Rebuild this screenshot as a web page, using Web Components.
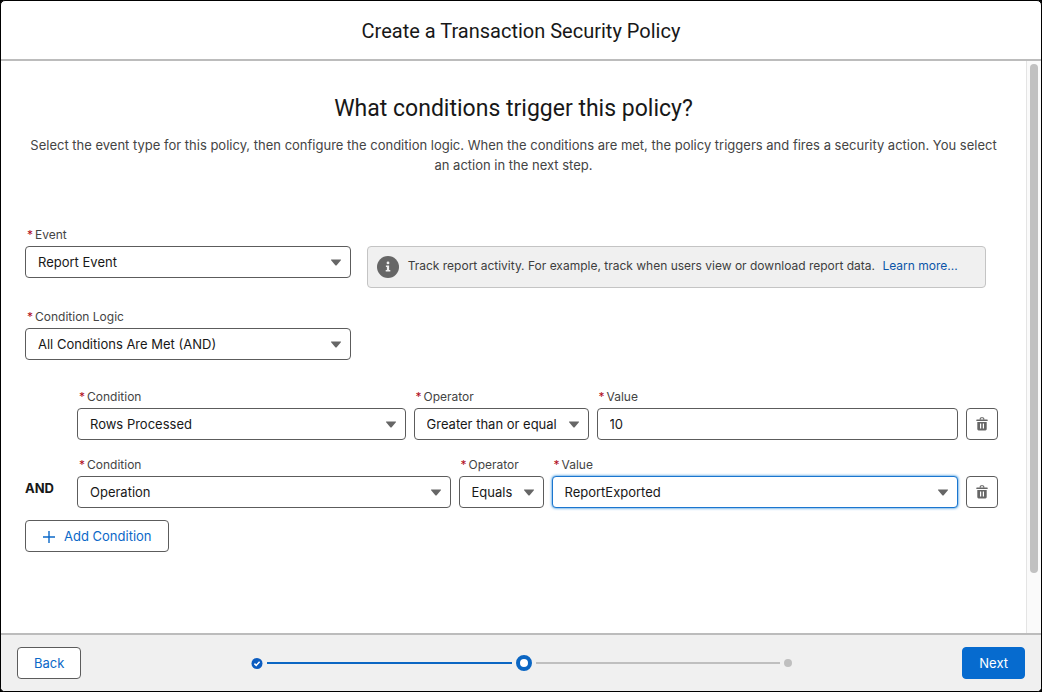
<!DOCTYPE html>
<html lang="en">
<head>
<meta charset="utf-8">
<meta name="viewport" content="width=device-width, initial-scale=1">
<title>Create a Transaction Security Policy</title>
<style>
  body {
    margin: 0;
    background: #000;
    color: #181818;
    font: 13px/20px Inter, "Liberation Sans", sans-serif;
  }
</style>
</head>
<body>
<tsp-wizard>
  <h1 slot="title">Create a Transaction Security Policy</h1>
  <tsp-intro>
    <h2 slot="heading">What conditions trigger this policy?</h2>
    Select the event type for this policy, then configure the condition logic. When the conditions are met, the policy triggers and fires a security action. You select an action in the next step.
  </tsp-intro>
  <tsp-event-form></tsp-event-form>
  <tsp-button slot="back">Back</tsp-button>
  <tsp-progress slot="progress"></tsp-progress>
  <tsp-button slot="next" variant="brand">Next</tsp-button>
</tsp-wizard>

<script>
/**
 * Creates a template element from markup.
 *
 * @param {string} html - The markup.
 * @returns {HTMLTemplateElement} - The template.
 */
function createTemplate (html) {
  const template = document.createElement('template')
  template.innerHTML = html
  return template
}

const wizardTemplate = createTemplate(`
 <style>
   :host {
     display: flex;
     flex-direction: column;
     box-sizing: border-box;
     height: 100vh;
     border: 1px solid #000;
     border-radius: 5px;
     background: #fff;
     overflow: hidden;
   }
   header {
     padding: 17px 16px 15px;
     border-bottom: 2px solid #bcbcbc;
     text-align: center;
   }
   ::slotted(h1) {
     margin: 0;
     font-family: Roboto, Inter, sans-serif;
     font-size: 20px;
     line-height: 26px;
     font-weight: 400;
   }
   .body {
     display: flex;
     flex: 1;
     min-height: 0;
   }
   main {
     flex: 1;
     padding: 32px 24px 0;
     overflow: hidden;
   }
   .track {
     display: flex;
     flex-direction: column;
     width: 15px;
     padding: 3px 0;
     box-sizing: border-box;
     border-left: 1px solid #e4e4e4;
     background: #fafafa;
   }
   .thumb {
     height: 90%;
     margin: 0 3px;
     border-radius: 4px;
     background: #c1c1c1;
   }
   footer {
     display: flex;
     align-items: center;
     justify-content: space-between;
     padding: 12px 16px;
     border-top: 2px solid #bcbcbc;
     background: #f0f0f0;
   }
   ::slotted(tsp-progress) {
     flex: 1;
     margin: 0 170px;
   }
 </style>

 <header><slot name="title"></slot></header>
 <div class="body">
   <main><slot></slot></main>
   <div class="track" aria-hidden="true"><div class="thumb"></div></div>
 </div>
 <footer>
   <slot name="back"></slot>
   <slot name="progress"></slot>
   <slot name="next"></slot>
 </footer>
`)

customElements.define('tsp-wizard',
  class Wizard extends HTMLElement {
    constructor () {
      super()
      this.attachShadow({ mode: 'open' })
        .appendChild(wizardTemplate.content.cloneNode(true))
    }
  }
)

const introTemplate = createTemplate(`
 <style>
   :host {
     display: block;
     margin-bottom: 51px;
     text-align: center;
   }
   ::slotted(h2) {
     margin: 0 0 10px;
     font-family: Roboto, Inter, sans-serif;
     font-size: 23px;
     line-height: 32px;
     font-weight: 400;
   }
   p {
     margin: 0;
     color: #444;
   }
 </style>

 <slot name="heading"></slot>
 <p><slot></slot></p>
`)

customElements.define('tsp-intro',
  /**
   * Represents the heading of a step and its description.
   */
  class Intro extends HTMLElement {
    constructor () {
      super()
      this.attachShadow({ mode: 'open' })
        .appendChild(introTemplate.content.cloneNode(true))
    }
  }
)

const fieldTemplate = createTemplate(`
 <style>
   :host {
     display: block;
   }
   label {
     display: block;
     padding: 0 2px 2px;
     color: #444;
     font-size: 12px;
     line-height: 18px;
     white-space: nowrap;
   }
   label span {
     margin-right: 2px;
     color: #b00c1a;
   }
   .control {
     position: relative;
   }
   select,
   input {
     display: block;
     box-sizing: border-box;
     width: 100%;
     height: 32px;
     margin: 0;
     padding: 0 12px;
     border: 1px solid #5c5c5c;
     border-radius: 4px;
     outline: 0;
     background: #fff;
     color: #181818;
     font: inherit;
     appearance: none;
   }
   select {
     padding-right: 30px;
   }
   svg {
     position: absolute;
     top: 13px;
     right: 9px;
     width: 12px;
     height: 7px;
     fill: #666;
     pointer-events: none;
   }
   :host([active]) select {
     border-color: #1b76cf;
     box-shadow: 0 0 3px #0176d3;
   }
 </style>

 <label for="field"><span aria-hidden="true">*</span></label>
 <div class="control"></div>
`)

customElements.define('tsp-field',
  /**
   * Represents a required field, either a drop-down or a text box.
   */
  class Field extends HTMLElement {
    constructor () {
      super()
      this.attachShadow({ mode: 'open' })
        .appendChild(fieldTemplate.content.cloneNode(true))
    }

    /**
     * Called after the element is inserted into the DOM.
     */
    connectedCallback () {
      const value = this.getAttribute('value')
      this.shadowRoot.querySelector('label').append(this.getAttribute('label'))

      const control = this.shadowRoot.querySelector('.control')
      if (this.hasAttribute('text')) {
        control.innerHTML = `<input id="field" type="text" value="${value}" required>`
      } else {
        control.innerHTML = `
          <select id="field" required><option>${value}</option></select>
          <svg viewBox="0 0 12 7" aria-hidden="true"><path d="M1.4 0.5h9.2q.8 0 .3.7L6.7 6.2q-.7.7-1.4 0L1.1 1.2q-.5-.7.3-.7z"/></svg>`
      }
    }
  }
)

const buttonTemplate = createTemplate(`
 <style>
   :host {
     display: inline-block;
   }
   button {
     display: flex;
     align-items: center;
     gap: 8px;
     box-sizing: border-box;
     height: 32px;
     margin: 0;
     padding: 0 16px;
     border: 1px solid #5c5c5c;
     border-radius: 4px;
     background: #fff;
     color: #0b68c8;
     font: inherit;
   }
   :host([variant=brand]) button {
     border-color: #066bcf;
     background: #066bcf;
     color: #fff;
   }
 </style>

 <button type="button"><slot></slot></button>
`)

customElements.define('tsp-button',
  /**
   * Represents a button.
   */
  class Button extends HTMLElement {
    constructor () {
      super()
      this.attachShadow({ mode: 'open' })
        .appendChild(buttonTemplate.content.cloneNode(true))
    }
  }
)

const progressTemplate = createTemplate(`
 <style>
   :host {
     display: flex;
     align-items: center;
     gap: 4px;
   }
   svg {
     width: 12px;
     height: 12px;
   }
   .line {
     flex: 1;
     height: 2px;
     background: #bfbfbf;
   }
   .done {
     background: #0b66c3;
   }
   .current {
     box-sizing: border-box;
     width: 16px;
     height: 16px;
     border: 4px solid #0b66c3;
     border-radius: 50%;
     background: #fff;
   }
   .next {
     width: 8px;
     height: 8px;
     border-radius: 50%;
     background: #bfbfbf;
   }
 </style>

 <svg viewBox="0 0 12 12" role="img" aria-label="Completed">
   <circle cx="6" cy="6.5" r="5.5" fill="#0b5cc0"/>
   <path d="M3.4 6.6l1.8 1.8 3.4-3.6" fill="none" stroke="#fff" stroke-width="1.5"/>
 </svg>
 <div class="line done"></div>
 <div class="current"></div>
 <div class="line"></div>
 <div class="next"></div>
`)

customElements.define('tsp-progress',
  /**
   * Represents the progress through the three steps.
   */
  class Progress extends HTMLElement {
    constructor () {
      super()
      this.attachShadow({ mode: 'open' })
        .appendChild(progressTemplate.content.cloneNode(true))
    }
  }
)

const noteTemplate = createTemplate(`
 <style>
   :host {
     display: flex;
     gap: 9px;
     padding: 9px;
     border: 1px solid #c4c4c4;
     border-radius: 4px;
     background: #f0f0f0;
     color: #3e3e3e;
     font-size: 12px;
   }
   svg {
     flex: none;
     width: 22px;
     height: 22px;
   }
   ::slotted(a) {
     margin-left: 4px;
     color: #0b55a8;
     text-decoration: none;
   }
 </style>

 <svg viewBox="0 0 22 22" aria-hidden="true">
   <circle cx="11" cy="11" r="11" fill="#666"/>
   <circle cx="11" cy="6.9" r="1.4" fill="#f0f0f0"/>
   <path d="M8.9 9.5h3.2v4.6h1.2v1.5H8.7v-1.5h1.2V11h-1z" fill="#f0f0f0"/>
 </svg>
 <div><slot></slot></div>
`)

customElements.define('tsp-note',
  /**
   * Represents an informational note.
   */
  class Note extends HTMLElement {
    constructor () {
      super()
      this.attachShadow({ mode: 'open' })
        .appendChild(noteTemplate.content.cloneNode(true))
    }
  }
)

const rowTemplate = createTemplate(`
 <style>
   :host {
     display: flex;
     align-items: flex-end;
     gap: 8px;
     padding-right: 4px;
   }
   .logic {
     width: 44px;
     padding-bottom: 10px;
     font-weight: 700;
   }
   ::slotted([label=Condition]) {
     flex: 1 1 0;
   }
   ::slotted([label=Operator]) {
     flex: none;
   }
   ::slotted([label=Value]) {
     flex: 1 1 33px;
   }
   button {
     display: flex;
     align-items: center;
     justify-content: center;
     box-sizing: border-box;
     width: 32px;
     height: 32px;
     margin: 0;
     padding: 0;
     border: 1px solid #5c5c5c;
     border-radius: 4px;
     background: #fff;
   }
   svg {
     width: 12px;
     height: 14px;
   }
 </style>

 <div class="logic"></div>
 <slot></slot>
 <button type="button" aria-label="Delete condition">
   <svg viewBox="0 0 12 14" aria-hidden="true">
     <path d="M4.2 2.8V1.7q0-1 1-1h1.6q1 0 1 1v1.1" fill="none" stroke="#666" stroke-width="1.1"/>
     <rect x="0.3" y="2.5" width="11.4" height="1.6" rx="0.6" fill="#666"/>
     <path fill-rule="evenodd" fill="#666" d="M1.3 5h9.4v7.1q0 1.3-1.3 1.3H2.6q-1.3 0-1.3-1.3zM4 6.4v5.2h1.2V6.4zM6.8 6.4v5.2H8V6.4z"/>
   </svg>
 </button>
`)

customElements.define('tsp-condition-row',
  /**
   * Represents one condition with its delete button.
   */
  class ConditionRow extends HTMLElement {
    constructor () {
      super()
      this.attachShadow({ mode: 'open' })
        .appendChild(rowTemplate.content.cloneNode(true))
    }

    /**
     * Called after the element is inserted into the DOM.
     */
    connectedCallback () {
      this.shadowRoot.querySelector('.logic').textContent = this.getAttribute('logic') || ''
    }
  }
)

const formTemplate = createTemplate(`
 <style>
   :host {
     display: block;
   }
   .event {
     display: flex;
     align-items: flex-start;
     margin-bottom: 20px;
   }
   .third {
     flex: none;
     width: calc(100% / 3);
   }
   tsp-note {
     flex: 1;
     margin: 20px 16px 0;
   }
   .conditions {
     display: grid;
     gap: 16px;
     margin: 28px 0 12px;
   }
   svg {
     width: 14px;
     height: 14px;
   }
 </style>

 <div class="event">
   <tsp-field class="third" label="Event" value="Report Event"></tsp-field>
   <tsp-note>Track report activity. For example, track when users view or download report data. <a href="#">Learn more...</a></tsp-note>
 </div>
 <tsp-field class="third" label="Condition Logic" value="All Conditions Are Met (AND)"></tsp-field>
 <div class="conditions">
   <tsp-condition-row>
     <tsp-field label="Condition" value="Rows Processed"></tsp-field>
     <tsp-field label="Operator" value="Greater than or equal"></tsp-field>
     <tsp-field label="Value" value="10" text></tsp-field>
   </tsp-condition-row>
   <tsp-condition-row logic="AND">
     <tsp-field label="Condition" value="Operation"></tsp-field>
     <tsp-field label="Operator" value="Equals"></tsp-field>
     <tsp-field label="Value" value="ReportExported" active></tsp-field>
   </tsp-condition-row>
 </div>
 <tsp-button>
   <svg viewBox="0 0 14 14" aria-hidden="true"><path d="M7 2v12M1 8h12" stroke="#0b68c8" stroke-width="1.4"/></svg>
   Add Condition
 </tsp-button>
`)

customElements.define('tsp-event-form',
  /**
   * Represents the form for the event and its conditions.
   */
  class EventForm extends HTMLElement {
    constructor () {
      super()
      this.attachShadow({ mode: 'open' })
        .appendChild(formTemplate.content.cloneNode(true))
    }
  }
)
</script>
</body>
</html>
